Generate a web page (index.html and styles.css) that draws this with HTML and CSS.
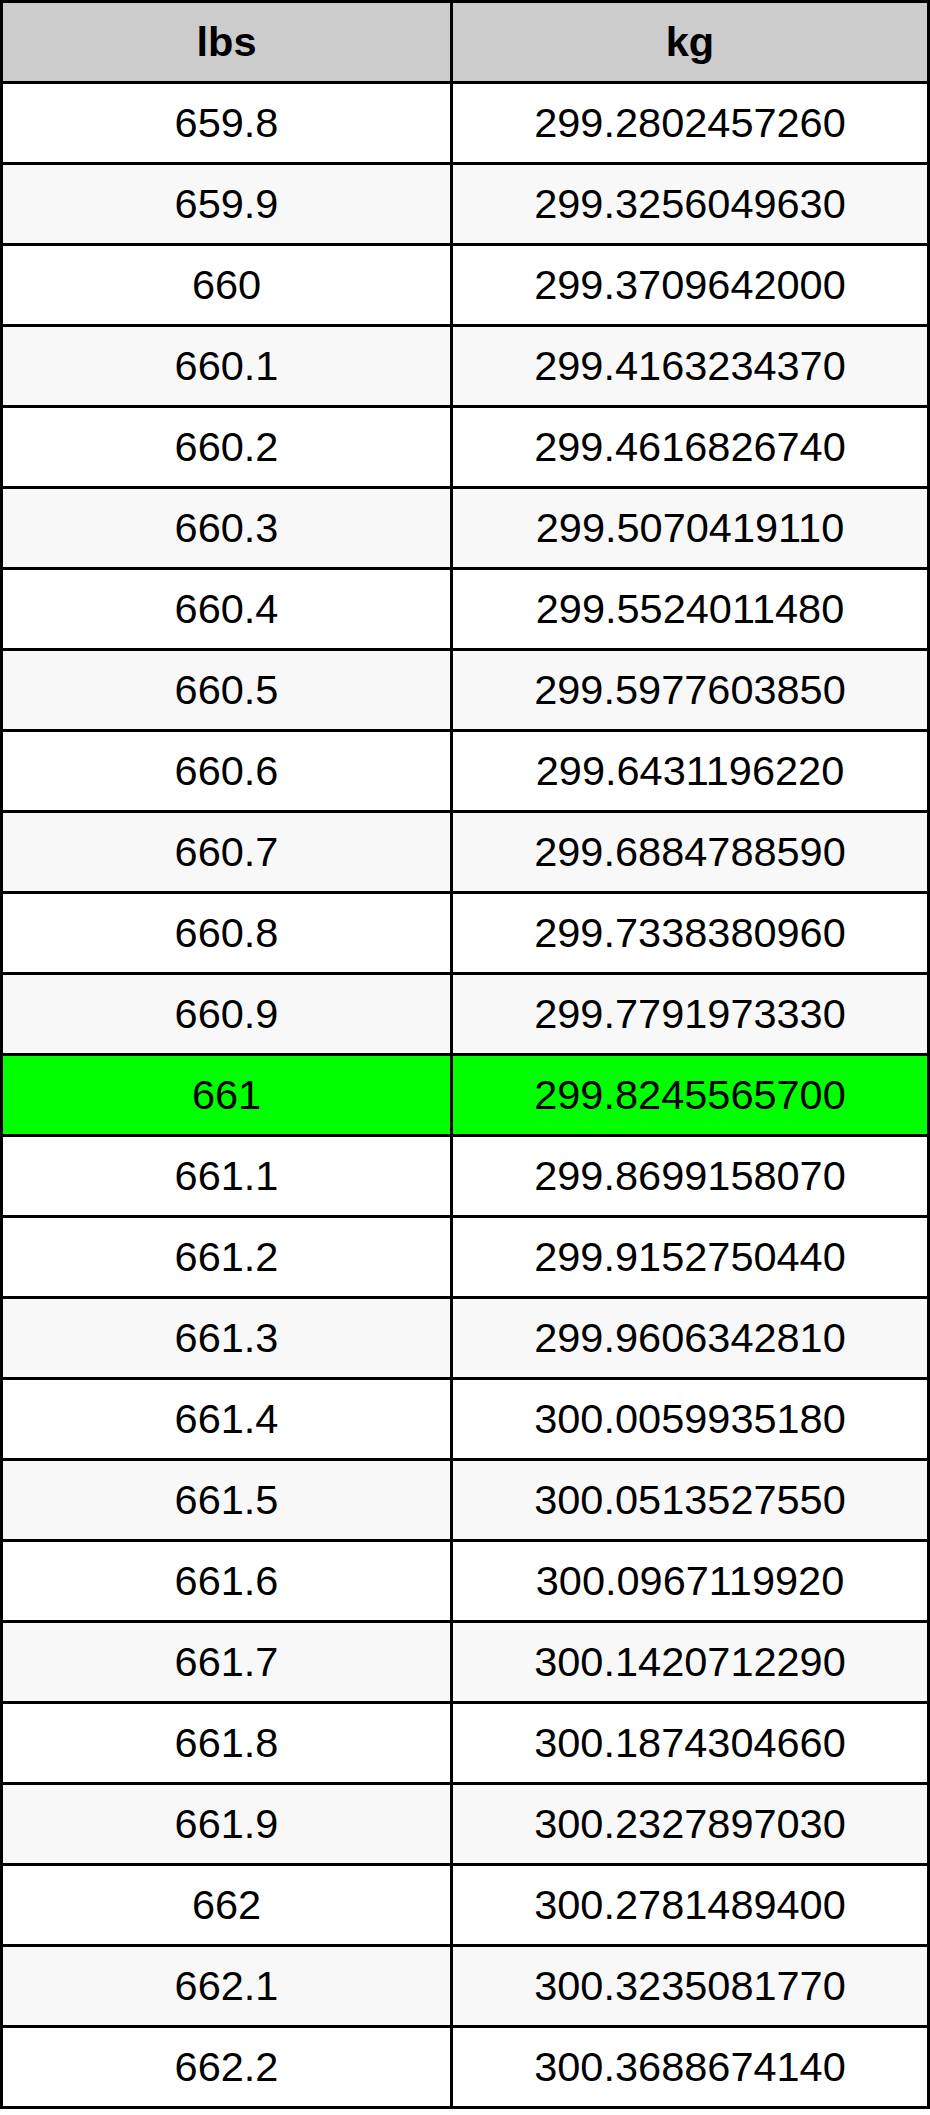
FILE: index.html
```html
<!DOCTYPE html>
<html lang="en">
<head>
<meta charset="utf-8">
<title>lbs to kg</title>
<link rel="stylesheet" href="styles.css">
</head>
<body>
<table class="conv">
<colgroup><col class="c1"><col class="c2"></colgroup>
<thead>
<tr><th>lbs</th><th>kg</th></tr>
</thead>
<tbody>
<tr><td>659.8</td><td>299.2802457260</td></tr>
<tr><td>659.9</td><td>299.3256049630</td></tr>
<tr><td>660</td><td>299.3709642000</td></tr>
<tr><td>660.1</td><td>299.4163234370</td></tr>
<tr><td>660.2</td><td>299.4616826740</td></tr>
<tr><td>660.3</td><td>299.5070419110</td></tr>
<tr><td>660.4</td><td>299.5524011480</td></tr>
<tr><td>660.5</td><td>299.5977603850</td></tr>
<tr><td>660.6</td><td>299.6431196220</td></tr>
<tr><td>660.7</td><td>299.6884788590</td></tr>
<tr><td>660.8</td><td>299.7338380960</td></tr>
<tr><td>660.9</td><td>299.7791973330</td></tr>
<tr class="hl"><td>661</td><td>299.8245565700</td></tr>
<tr class="plain"><td>661.1</td><td>299.8699158070</td></tr>
<tr><td>661.2</td><td>299.9152750440</td></tr>
<tr><td>661.3</td><td>299.9606342810</td></tr>
<tr><td>661.4</td><td>300.0059935180</td></tr>
<tr><td>661.5</td><td>300.0513527550</td></tr>
<tr><td>661.6</td><td>300.0967119920</td></tr>
<tr><td>661.7</td><td>300.1420712290</td></tr>
<tr><td>661.8</td><td>300.1874304660</td></tr>
<tr><td>661.9</td><td>300.2327897030</td></tr>
<tr><td>662</td><td>300.2781489400</td></tr>
<tr><td>662.1</td><td>300.3235081770</td></tr>
<tr><td>662.2</td><td>300.3688674140</td></tr>
</tbody>
</table>
</body>
</html>
```
FILE: styles.css
```css
html, body {
  margin: 0;
  padding: 0;
  background: #fff;
}
.conv {
  width: 930px;
  table-layout: fixed;
  border-collapse: collapse;
  border: 3px solid #000;
  font-family: "Liberation Sans", Arial, sans-serif;
  font-size: 41.5px;
  color: #000;
}
.conv .c1 { width: 450px; }
.conv .c2 { width: 477px; }
.conv th,
.conv td {
  border: 3px solid #000;
  padding: 0;
  line-height: 76px;
  height: 78px;
  text-align: center;
  vertical-align: middle;
}
.conv th {
  background: #cccccc;
  font-weight: bold;
}
.conv tbody tr:nth-child(odd) td { background: #ffffff; }
.conv tbody tr:nth-child(even) td { background: #f8f8f8; }
.conv tbody tr.plain td { background: #ffffff; }
.conv tbody tr.hl td { background: #00ff00; }
```
